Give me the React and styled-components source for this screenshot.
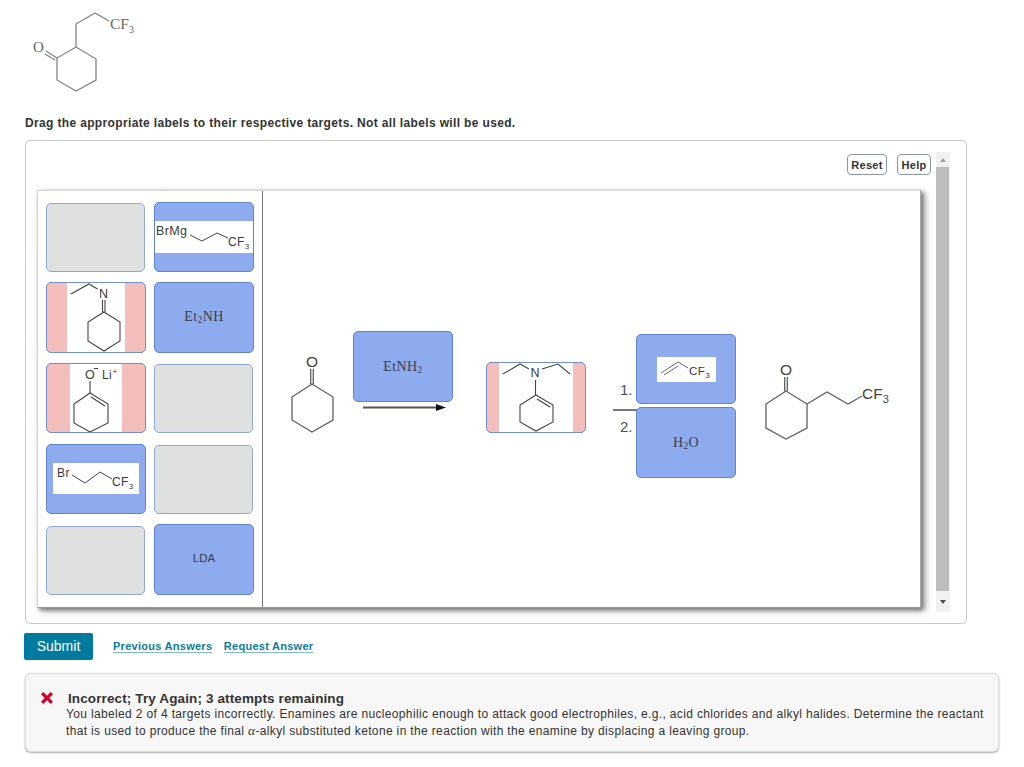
import React from "react";
import styled, { createGlobalStyle } from "styled-components";

const Global = createGlobalStyle`
  html, body { margin: 0; padding: 0; background: #fff; }
  body { font-family: "Liberation Sans", Arial, sans-serif; color: #333; overflow: hidden; }
`;

const Page = styled.div`
  width: 1024px;
  height: 767px;
  box-sizing: border-box;
  padding-left: 25px;
`;

const HeaderMol = styled.div`
  height: 115px;
`;

const Instruction = styled.p`
  margin: 0;
  font-size: 12px;
  font-weight: 700;
  line-height: 16px;
  letter-spacing: 0.35px;
  color: #333;
`;

const Panel = styled.section`
  box-sizing: border-box;
  width: 942px;
  height: 484px;
  margin-top: 9px;
  padding: 11px 16px 11px 11px;
  border: 1px solid #c9c9c9;
  border-radius: 5px;
  display: flex;
  gap: 5px;
`;

const Main = styled.div`
  width: 894px;
  display: flex;
  flex-direction: column;
`;

const Toolbar = styled.div`
  height: 38px;
  box-sizing: border-box;
  padding-top: 2px;
  display: flex;
  justify-content: flex-end;
  align-items: flex-start;
  gap: 10px;
`;

const ToolButton = styled.button`
  box-sizing: border-box;
  height: 21px;
  width: ${(p) => p.$w}px;
  padding: 0;
  background: #fff;
  border: 1px solid #8a9a9e;
  border-radius: 4px;
  font: 700 11px "Liberation Sans", Arial, sans-serif;
  letter-spacing: 0.3px;
  color: #333;
`;

const Canvas = styled.div`
  box-sizing: border-box;
  width: 884px;
  height: 418px;
  display: flex;
  background: #fff;
  border: 1px solid #d4d4d4;
  border-bottom: 1px solid #999;
  border-right: 1px solid #aaa;
  box-shadow: 2px 2px 4px #777, 5px 3px 7px #bbb;
`;

const Tray = styled.div`
  box-sizing: border-box;
  width: 225px;
  flex: none;
  border-right: 1px solid #777;
  padding: 12px 8px 0 8px;
  display: grid;
  grid-template-columns: 99px 99px;
  grid-auto-rows: 69px;
  column-gap: 9px;
  row-gap: 11.7px;
  align-content: start;
`;

const Scheme = styled.div`
  position: relative;
  flex: 1;
`;

const Slot = styled.div`
  box-sizing: border-box;
  background: #dfe1e0;
  border: 1px solid #8fa8d6;
  border-radius: 5px;
`;

const Label = styled.div`
  box-sizing: border-box;
  margin: -1.5px -1px 0 0;
  display: flex;
  align-items: center;
  justify-content: center;
  background: ${(p) => (p.$wrong ? "#f3bebc" : "#8dabee")};
  border: 1px solid ${(p) => (p.$wrong ? "#6f8fd0" : "#5f86cc")};
  border-radius: 5px;
  font-family: ${(p) => (p.$sans ? '"Liberation Sans", Arial, sans-serif' : '"Liberation Serif", "Times New Roman", serif')};
  font-size: ${(p) => (p.$sans ? "11.5px" : "14px")};
  letter-spacing: ${(p) => (p.$sans ? "0" : "0.4px")};
  padding-bottom: ${(p) => (p.$sans ? "3px" : "0")};
  color: #3a3f4a;
  overflow: hidden;
`;

const SchemeLabel = styled(Label)`
  position: absolute;
  margin: 0;
  left: ${(p) => p.$x - 263}px;
  top: ${(p) => p.$y - 191}px;
  width: ${(p) => p.$w || 100}px;
  height: ${(p) => p.$h || 71}px;
`;

const Sub = styled.sub`
  font-size: 9.5px;
  line-height: 0;
  vertical-align: -2px;
`;

const Strip = styled.div`
  background: #fff;
  display: block;
  width: ${(p) => p.$w}px;
  height: ${(p) => p.$h}px;
  flex: none;
`;

const Art = styled.svg`
  display: block;
  overflow: visible;
`;

const Free = styled.div`
  position: absolute;
  left: ${(p) => p.$x - 263}px;
  top: ${(p) => p.$y - 191}px;
`;

const StepNo = styled.span`
  position: absolute;
  left: ${(p) => p.$x - 263}px;
  top: ${(p) => p.$y - 191}px;
  font-size: 15px;
  line-height: 16px;
  color: #505050;
`;

const StepRule = styled.div`
  position: absolute;
  left: ${613 - 263}px;
  top: ${409 - 191}px;
  width: 114px;
  height: 2px;
  background: #777;
`;

const Scrollbar = styled.div`
  width: 14px;
  height: 460px;
  display: flex;
  flex-direction: column;
  background: #f1f1f1;
`;

const ScrollEnd = styled.div`
  height: ${(p) => p.$h}px;
  flex: none;
  display: flex;
  align-items: center;
  justify-content: center;
`;

const Arrow = styled.div`
  width: 0;
  height: 0;
  border-left: 3.5px solid transparent;
  border-right: 3.5px solid transparent;
  ${(p) => (p.$up ? "border-bottom: 4px solid #a3a3a3;" : "border-top: 4px solid #505050;")}
`;

const Thumb = styled.div`
  flex: 1;
  margin: 0 1px 0 0;
  background: #bdbdbd;
`;

const Actions = styled.div`
  display: flex;
  align-items: center;
  height: 27px;
  margin-top: 9px;
  margin-left: -1px;
`;

const Submit = styled.button`
  box-sizing: border-box;
  width: 69px;
  height: 27px;
  padding: 0 0 2px;
  margin-right: 20px;
  border: none;
  border-radius: 2px;
  background: #007a9f;
  color: #fff;
  font: 400 14px "Liberation Sans", Arial, sans-serif;
`;

const ActionLink = styled.a`
  font-size: 11px;
  font-weight: 700;
  letter-spacing: 0.27px;
  color: #0a7c9e;
  text-decoration: none;
  border-bottom: 1px solid #7fbcd0;
  line-height: 12px;
  margin-right: 11.5px;
`;

const Feedback = styled.div`
  box-sizing: border-box;
  width: 974px;
  height: 79px;
  margin-top: 13px;
  padding: 17px 10px 0 14px;
  display: flex;
  gap: 14px;
  background: #f7f7f7;
  border: 1px solid #dcdcdc;
  border-radius: 6px;
  box-shadow: 0 1px 2px #aaa;
`;

const FeedbackIcon = styled.div`
  flex: none;
  width: 14px;
`;

const FeedbackBody = styled.div`
  flex: 1;
`;

const FeedbackTitle = styled.div`
  font-size: 13.5px;
  font-weight: 700;
  line-height: 16px;
  letter-spacing: 0.12px;
  color: #333;
`;

const FeedbackText = styled.div`
  margin-left: -2px;
  font-size: 12px;
  line-height: 15.5px;
  letter-spacing: 0.35px;
  color: #333;
`;

const Alpha = styled.span`
  font-family: "Liberation Serif", serif;
  font-style: italic;
  font-size: 13.5px;
`;

const Mol = ({ box, children, stroke = "#555", sw = 1.3 }) => {
  const [x, y, w, h] = box;
  return (
    <Art width={w} height={h} viewBox={`${x} ${y} ${w} ${h}`} fill="none" stroke={stroke} strokeWidth={sw}>
      {children}
    </Art>
  );
};

const T = ({ x, y, size = 12, fill = "#3a3a3a", font = '"Liberation Sans", Arial, sans-serif', children }) => (
  <text x={x} y={y} fontSize={size} fontFamily={font} fill={fill} stroke="none">
    {children}
  </text>
);

const S3 = ({ size = 9 }) => (
  <tspan fontSize={size} dy={size * 0.35}>
    3
  </tspan>
);

const BrMgArt = () => (
  <Mol box={[155, 220, 98, 32]} stroke="#444" sw={1}>
    <T x={156} y={234} size={12.5}>BrMg</T>
    <path d="M190 234 L202 240 L217 232 L228 237" />
    <T x={228} y={245} size={12}>CF<S3 size={8} /></T>
  </Mol>
);

const ImineArt = () => (
  <Mol box={[67, 282, 58, 69]} stroke="#444" sw={1.1}>
    <path d="M71 293 L89 283 L97.5 288" />
    <T x={99} y={297} size={12.5}>N</T>
    <path d="M102.5 299 V311 M105 299 V311" />
    <path d="M104 311 L120 321 V340 L104 350 L88 340 V321 Z" />
  </Mol>
);

const EnolateArt = () => (
  <Mol box={[70, 363, 52, 69]} stroke="#444" sw={1.1}>
    <T x={85} y={378} size={12.5}>O</T>
    <path d="M94 367.5 H98" />
    <T x={102} y={378} size={12}>Li</T>
    <T x={112.5} y={373} size={8}>+</T>
    <path d="M90 380 V392" />
    <path d="M90 392 L108 403 V422 L90 431 L74 422 V403 Z" />
    <path d="M91 396 L105 405" />
  </Mol>
);

const BrArt = () => (
  <Mol box={[53, 463, 86, 31]} stroke="#444" sw={1}>
    <T x={57} y={477} size={12}>Br</T>
    <path d="M72 475 L85 483 L100 472 L112 479" />
    <T x={112} y={486} size={12}>CF<S3 size={8} /></T>
  </Mol>
);

const EnamineArt = () => (
  <Mol box={[499, 363, 74, 69]} stroke="#444" sw={1.1}>
    <path d="M503 374 L520 364 L529 369 M542 369 L558 364 L570 374" />
    <T x={530.5} y={377} size={12.5}>N</T>
    <path d="M535.5 380 V395" />
    <path d="M536 395 L553 405 V422 L536 431 L520 422 V405 Z" />
    <path d="M537 399 L550 407" />
  </Mol>
);

const VinylArt = () => (
  <Mol box={[656, 356, 59, 25]} stroke="#666" sw={1}>
    <path d="M660 372 L677 361 L687 367 M663 374 L677 365" />
    <T x={688} y={374} size={11.5}>CF<S3 size={8} /></T>
  </Mol>
);

const Top = () => (
  <Mol box={[25, 0, 130, 100]} stroke="#858585" sw={1.3}>
    <path d="M109 21 L95 13 L76 24 V47 L96 59 V80 L76 91 L57 80 V58 L76 47" />
    <path d="M57 58 L46 51 M55 60 L45 54" />
    <T x={33} y={52} size={15} fill="#666" font='"Liberation Serif", serif'>O</T>
    <T x={110} y={29} size={15.5} fill="#666" font='"Liberation Serif", serif'>CF<S3 size={10} /></T>
  </Mol>
);

const Ketone = () => (
  <Mol box={[285, 350, 55, 90]} stroke="#606060" sw={1.3}>
    <T x={306} y={366.5} size={15.5} fill="#444">O</T>
    <path d="M310.7 369 V384 M313.3 369 V384" />
    <path d="M312 384 L333 397 V420 L312 432 L292 420 V397 Z" />
  </Mol>
);

const ReactionArrow = () => (
  <Mol box={[360, 400, 90, 14]} stroke="#555" sw={2}>
    <path d="M363 407.5 H438" />
    <path d="M436 404 L446 407.5 L436 411 Z" fill="#111" stroke="none" />
  </Mol>
);

const Product = () => (
  <Mol box={[760, 355, 135, 90]} stroke="#606060" sw={1.3}>
    <T x={780} y={374.5} size={15.5} fill="#444">O</T>
    <path d="M784.7 377 V391 M787.3 377 V391" />
    <path d="M786 391 L807 404 V428 L786 439 L766 428 V404 Z" />
    <path d="M807 404 L827 392 L848 404 L862 396" />
    <T x={862} y={399} size={15.5} fill="#444">CF<S3 size={11} /></T>
  </Mol>
);

const CrossIcon = () => (
  <svg width="14" height="14" viewBox="0 0 14 14">
    <path d="M1 3.3 L3.3 1 L7 4.7 L10.7 1 L13 3.3 L9.3 7 L13 10.7 L10.7 13 L7 9.3 L3.3 13 L1 10.7 L4.7 7 Z" fill="#d4022a" />
  </svg>
);

export default function App() {
  return (
    <Page>
      <Global />
      <HeaderMol>
        <Top />
      </HeaderMol>
      <Instruction>Drag the appropriate labels to their respective targets. Not all labels will be used.</Instruction>
      <Panel>
        <Main>
          <Toolbar>
            <ToolButton $w={40}>Reset</ToolButton>
            <ToolButton $w={34}>Help</ToolButton>
          </Toolbar>
          <Canvas>
            <Tray>
              <Slot />
              <Label>
                <Strip $w={98} $h={32}><BrMgArt /></Strip>
              </Label>
              <Label $wrong>
                <Strip $w={58} $h={69}><ImineArt /></Strip>
              </Label>
              <Label>
                <span>Et<Sub>2</Sub>NH</span>
              </Label>
              <Label $wrong>
                <Strip $w={52} $h={69}><EnolateArt /></Strip>
              </Label>
              <Slot />
              <Label>
                <Strip $w={86} $h={31}><BrArt /></Strip>
              </Label>
              <Slot />
              <Slot />
              <Label $sans>LDA</Label>
            </Tray>
            <Scheme>
              <Free $x={285} $y={350}><Ketone /></Free>
              <SchemeLabel $x={353} $y={331}>
                <span>EtNH<Sub>2</Sub></span>
              </SchemeLabel>
              <Free $x={360} $y={400}><ReactionArrow /></Free>
              <SchemeLabel $x={486} $y={362} $wrong>
                <Strip $w={74} $h={69}><EnamineArt /></Strip>
              </SchemeLabel>
              <StepRule />
              <StepNo $x={620} $y={382}>1.</StepNo>
              <StepNo $x={620} $y={419}>2.</StepNo>
              <SchemeLabel $x={636} $y={334} $h={70}>
                <Strip $w={59} $h={25}><VinylArt /></Strip>
              </SchemeLabel>
              <SchemeLabel $x={636} $y={407}>
                <span>H<Sub>2</Sub>O</span>
              </SchemeLabel>
              <Free $x={760} $y={355}><Product /></Free>
            </Scheme>
          </Canvas>
        </Main>
        <Scrollbar>
          <ScrollEnd $h={15}><Arrow $up /></ScrollEnd>
          <Thumb />
          <ScrollEnd $h={21}><Arrow /></ScrollEnd>
        </Scrollbar>
      </Panel>
      <Actions>
        <Submit>Submit</Submit>
        <ActionLink>Previous Answers</ActionLink>
        <ActionLink>Request Answer</ActionLink>
      </Actions>
      <Feedback>
        <FeedbackIcon><CrossIcon /></FeedbackIcon>
        <FeedbackBody>
          <FeedbackTitle>Incorrect; Try Again; 3 attempts remaining</FeedbackTitle>
          <FeedbackText>
            You labeled 2 of 4 targets incorrectly. Enamines are nucleophilic enough to attack good electrophiles, e.g., acid chlorides and alkyl halides. Determine the reactant that is used to produce the final <Alpha>α</Alpha>-alkyl substituted ketone in the reaction with the enamine by displacing a leaving group.
          </FeedbackText>
        </FeedbackBody>
      </Feedback>
    </Page>
  );
}
